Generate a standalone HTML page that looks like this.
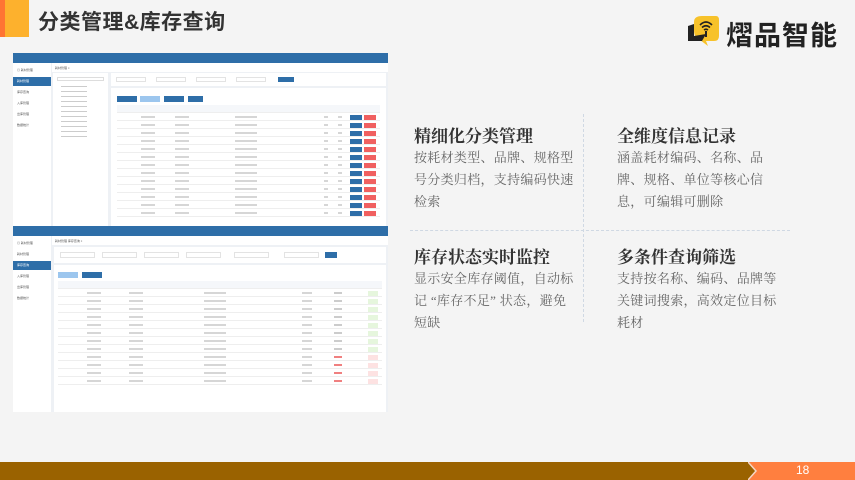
<!DOCTYPE html>
<html><head><meta charset="utf-8"><style>
*{margin:0;padding:0;box-sizing:border-box}
body{width:855px;height:480px;background:#f4f4f4;position:relative;overflow:hidden;font-family:"Liberation Sans","Noto Sans CJK SC",sans-serif}
.abs{position:absolute}
.h{font-family:"Liberation Serif","Noto Serif CJK SC",serif;font-size:17px;color:#333;font-weight:bold}
.p{font-family:"Liberation Serif","Noto Serif CJK SC",serif;font-size:13px;color:#666;line-height:22px;width:160px;letter-spacing:0.3px}
.shot{position:absolute;left:13px;width:375px;background:#eef1f5;overflow:hidden}
.bar{height:10px;background:#2e6ea8}
.side{position:absolute;left:0;top:10px;width:38px;bottom:0;background:#fff}
.side div{height:9px;margin-top:2px;font-size:3px;color:#555;padding-left:4px;line-height:9px}
.side .on{background:#2e6ea8;color:#fff}
.row{height:8px;border-bottom:1px solid #eee;background:#fff;position:relative}
.btn{position:absolute;height:5px;width:12px;top:1.5px}
.g{position:absolute;top:3px;height:2px;background:#d6d6d6}
</style></head><body>
<div class="abs" style="left:0;top:0;width:5px;height:37px;background:#ff7433"></div>
<div class="abs" style="left:5px;top:0;width:24px;height:37px;background:#fdb12d"></div>
<div class="abs" style="left:38px;top:6px;font-size:21px;color:#333;font-weight:bold;letter-spacing:0.5px">分类管理&amp;库存查询</div>
<svg class="abs" style="left:686px;top:16px" width="36" height="30" viewBox="0 0 36 30"><path d="M8 6 Q8 0 16 0 L30 0 Q33 0 33 4 L33 20 Q33 25 28 25 L20 25 L22 30 L14 24 Q8 22 8 14 Z" fill="#f7c22a"/><path d="M2 10 L8 8 L8 20 L20 18 L16 25 L2 25 Z" fill="#222"/><path d="M14 9 Q20 3 26 9 M16 11.5 Q20 8 24 11.5 M18 14 Q20 12.5 22 14" stroke="#222" stroke-width="1.6" fill="none"/><rect x="19" y="15" width="2" height="6" fill="#222"/></svg>
<div class="abs" style="left:726px;top:14px;font-size:27px;color:#222;font-weight:bold;letter-spacing:1px">熠品智能</div>

<div class="shot" style="top:53px;height:173px">
 <div class="bar"></div>
 <div class="side"><div style="margin-top:3px">◎ 耗材管理</div><div class="on">耗材管理</div><div>库存查询</div><div>入库管理</div><div>出库管理</div><div>数据统计</div></div>
 <div class="abs" style="left:39px;top:10px;right:0;height:9px;background:#fff;font-size:3px;color:#555;padding:3px">耗材管理 ×</div>
 <div class="abs" style="left:40px;top:20px;width:55px;bottom:0;background:#fff;padding:4px">
  <div style="height:4px;border:1px solid #ddd;margin-bottom:3px"></div>
  <div style="height:55px;background:repeating-linear-gradient(#fff 0 2px,#ccc 2px 3px,#fff 3px 5px);width:26px;margin-left:4px"></div>
 </div>
 <div class="abs" style="left:98px;top:20px;right:2px;height:13px;background:#fff">
  <div class="abs" style="left:5px;top:4px;width:30px;height:5px;border:1px solid #e3e3e3"></div>
  <div class="abs" style="left:45px;top:4px;width:30px;height:5px;border:1px solid #e3e3e3"></div>
  <div class="abs" style="left:85px;top:4px;width:30px;height:5px;border:1px solid #e3e3e3"></div>
  <div class="abs" style="left:125px;top:4px;width:30px;height:5px;border:1px solid #e3e3e3"></div>
  <div class="abs" style="left:167px;top:4px;width:16px;height:5px;background:#2e6ea8"></div></div>
 <div class="abs" style="left:98px;top:35px;right:2px;bottom:0;background:#fff;padding:8px 6px 0">
  <div style="height:6px;position:relative;margin-bottom:3px"><span class="abs" style="left:0;width:20px;height:6px;background:#2e6ea8"></span><span class="abs" style="left:23px;width:20px;height:6px;background:#9cc6ee"></span><span class="abs" style="left:47px;width:20px;height:6px;background:#2e6ea8"></span><span class="abs" style="left:71px;width:15px;height:6px;background:#2e6ea8"></span></div>
  <div id="t1"></div>
 </div>
</div>

<div class="shot" style="top:226px;height:186px">
 <div class="bar"></div>
 <div class="side"><div style="margin-top:3px">◎ 耗材管理</div><div>耗材管理</div><div class="on">库存查询</div><div>入库管理</div><div>出库管理</div><div>数据统计</div></div>
 <div class="abs" style="left:39px;top:10px;right:0;height:9px;background:#fff;font-size:3px;color:#555;padding:3px">耗材管理 库存查询 ×</div>
 <div class="abs" style="left:41px;top:21px;right:2px;height:16px;background:#fff">
  <div class="abs" style="left:6px;top:5px;width:35px;height:6px;border:1px solid #e3e3e3"></div>
  <div class="abs" style="left:48px;top:5px;width:35px;height:6px;border:1px solid #e3e3e3"></div>
  <div class="abs" style="left:90px;top:5px;width:35px;height:6px;border:1px solid #e3e3e3"></div>
  <div class="abs" style="left:132px;top:5px;width:35px;height:6px;border:1px solid #e3e3e3"></div>
  <div class="abs" style="left:180px;top:5px;width:35px;height:6px;border:1px solid #e3e3e3"></div>
  <div class="abs" style="left:230px;top:5px;width:35px;height:6px;border:1px solid #e3e3e3"></div>
  <div class="abs" style="left:271px;top:5px;width:12px;height:6px;background:#2e6ea8"></div></div>
 <div class="abs" style="left:41px;top:39px;right:2px;bottom:0;background:#fff;padding:7px 4px 0">
  <div style="height:6px;position:relative;margin-bottom:3px"><span class="abs" style="left:0;width:20px;height:6px;background:#9cc6ee"></span><span class="abs" style="left:24px;width:20px;height:6px;background:#2e6ea8"></span></div>
  <div id="t2"></div>
 </div>
</div>

<div class="abs" style="left:583px;top:114px;height:208px;border-left:1px dashed #cfd8e3"></div>
<div class="abs" style="left:410px;top:230px;width:380px;border-top:1px dashed #cfd8e3"></div>

<div class="abs h" style="left:414px;top:122px">精细化分类管理</div>
<div class="abs p" style="left:414px;top:147px">按耗材类型、品牌、规格型号分类归档，支持编码快速检索</div>
<div class="abs h" style="left:617px;top:122px">全维度信息记录</div>
<div class="abs p" style="left:617px;top:147px">涵盖耗材编码、名称、品牌、规格、单位等核心信息，可编辑可删除</div>
<div class="abs h" style="left:414px;top:243px">库存状态实时监控</div>
<div class="abs p" style="left:414px;top:268px">显示安全库存阈值，自动标记 “库存不足” 状态，避免短缺</div>
<div class="abs h" style="left:617px;top:243px">多条件查询筛选</div>
<div class="abs p" style="left:617px;top:268px">支持按名称、编码、品牌等关键词搜索，高效定位目标耗材</div>

<div class="abs" style="left:0;top:462px;width:760px;height:18px;background:#9a6200"></div>
<svg class="abs" style="left:748px;top:462px" width="107" height="18"><polygon points="0,0 107,0 107,18 0,18 8,9" fill="#ff7f3f"/><polyline points="0,0 8,9 0,18" stroke="#f4d7c5" stroke-width="1.5" fill="none"/></svg>
<div class="abs" style="left:796px;top:463px;font-size:12px;color:#fff">18</div>
<script>
function mk(id,n,red){var h='<div class="row" style="background:#f5f7fa"></div>';for(var i=0;i<n;i++){var b=red?'<span class="btn" style="right:4px;width:10px;background:'+(i<8?'#e6f6dd':'#fde2e2')+'"></span><span class="g" style="right:40px;width:8px;background:'+(i<8?'#ccc':'#f08080')+'"></span><span class="g" style="right:70px;width:10px"></span>':'<span class="btn" style="right:18px;background:#2e6ea8"></span><span class="btn" style="right:4px;background:#f06060"></span><span class="g" style="right:38px;width:4px"></span><span class="g" style="right:52px;width:4px"></span>';h+='<div class="row">'+b+'<span class="g" style="left:9%;width:14px"></span><span class="g" style="left:22%;width:14px"></span><span class="g" style="left:45%;width:22px"></span></div>';}document.getElementById(id).innerHTML=h;}
mk('t1',13,false);mk('t2',12,true);
</script>
</body></html>
